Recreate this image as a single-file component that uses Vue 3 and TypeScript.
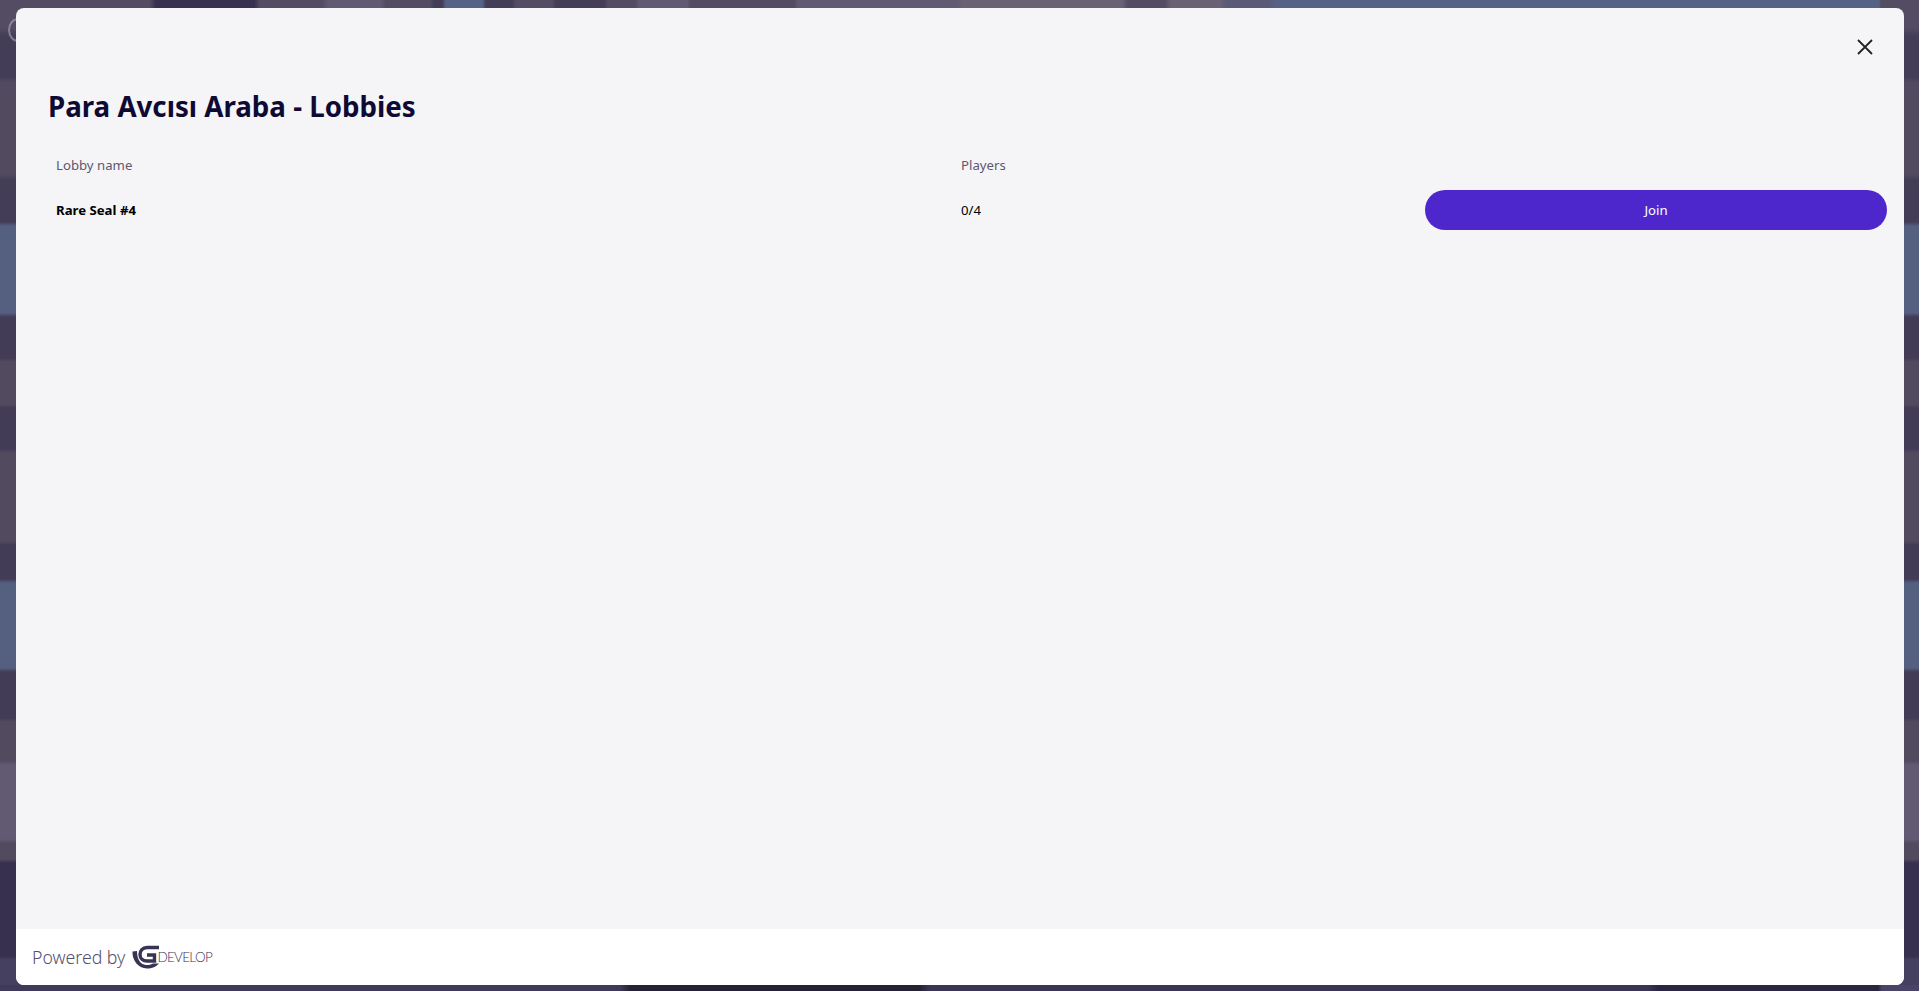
<script setup lang="ts">
interface Lobby { name: string; players: string }
const lobbies: Lobby[] = [{ name: 'Rare Seal #4', players: '0/4' }]
</script>

<template>
  <div class="page">
    <span class="ghost-letter"></span>
    <main class="modal">
      <div class="content">
        <div class="close-row">
          <button class="close" type="button" aria-label="Close">
            <svg width="16" height="16" viewBox="0 0 16 16">
              <path d="M1 1 15 15M15 1 1 15" stroke="#222" stroke-width="1.8" fill="none" />
            </svg>
          </button>
        </div>
        <h1 class="title">Para Avcısı Araba - Lobbies</h1>
        <div class="table">
          <div class="cell head">Lobby name</div>
          <div class="cell head">Players</div>
          <div class="cell head"></div>
          <template v-for="lobby in lobbies" :key="lobby.name">
            <div class="cell name">{{ lobby.name }}</div>
            <div class="cell players">{{ lobby.players }}</div>
            <div class="cell action"><button class="join" type="button">Join</button></div>
          </template>
        </div>
      </div>
      <footer class="footer">
        <span class="powered">Powered by</span>
        <span class="logo">
          <svg class="mark" width="28" height="24" viewBox="0 0 28 24">
            <path d="M0.5 6.5C0 15 6 23.5 15 23.5C20 23.5 24.5 21.5 27 18.5L21 18.5C18 20 16 20.2 14 20C8 19.5 5 14 5 6Z" fill="#3a3454" />
            <path d="M27 2.5H15C10.5 2.5 8 6 8 9.5C8 13.5 11 16 15 16H22.5V10H15" stroke="#3a3454" stroke-width="3.4" fill="none" />
          </svg>
          <span class="wordmark">DEVELOP</span>
        </span>
      </footer>
    </main>
  </div>
</template>

<style>
html, body { margin: 0; padding: 0; }
</style>

<style scoped>
.page {
  position: relative;
  box-sizing: border-box;
  width: 100%;
  height: 991px;
  padding: 8px 15px 6px 16px;
  display: flex;
  overflow: hidden;
  font-family: "Noto Sans", "Open Sans", sans-serif;
  background-color: #443d58;
  background-repeat: no-repeat;
  background-size: 100% 8px, 100% 6px, 100% 100%;
  background-position: top, bottom, center;
  background-image:
    linear-gradient(90deg,
      #544c62 0 150px, #37304e 156px 254px, #544c62 260px 322px, #625a72 328px 380px,
      #544c62 386px 430px, #443d58 434px 442px, #566285 446px 482px, #443d58 486px 512px,
      #544c62 516px 552px, #443d58 556px 604px, #544c62 608px 635px, #625a72 639px 687px,
      #544c62 691px 794px, #625a72 798px 958px, #6a6174 962px 1122px, #544c62 1128px 1165px,
      #6a6174 1171px 1220px, #5a5a78 1226px 1268px, #566285 1276px 1879px, #544c62 1881px),
    linear-gradient(90deg,
      #3f3a5a 0 620px, #262235 630px 920px, #3a3555 930px 1648px, #2a2640 1658px 1878px, #4a4568 1882px),
    linear-gradient(180deg,
      #544c62 0 28px, #443d58 36px 77px, #524b60 83px 174px, #443d58 180px 222px,
      #555f80 226px 313px, #423c56 317px 358px, #524b60 362px 404px, #423c56 408px 449px,
      #524b60 453px 541px, #423c56 545px 579px, #555f80 583px 668px, #423c56 672px 718px,
      #524b60 722px 761px, #625a72 765px 839px, #524b60 843px 859px, #37304e 863px 956px,
      #45405f 960px);
}
.ghost-letter {
  position: absolute;
  left: 8px;
  top: 18px;
  width: 20px;
  height: 24px;
  box-sizing: border-box;
  border: 2px solid rgba(255, 255, 255, 0.32);
  border-radius: 50%;
}
.modal {
  position: relative;
  flex: 1;
  min-width: 0;
  display: flex;
  flex-direction: column;
  border-radius: 8px;
  overflow: hidden;
  background: #f5f5f7;
}
.content {
  flex: 1;
  min-height: 0;
  padding: 0 9px 0 32px;
}
.close-row {
  display: flex;
  justify-content: flex-end;
  padding: 31px 22px 0 0;
}
.close {
  display: block;
  width: 16px;
  height: 16px;
  padding: 0;
  border: 0;
  background: none;
  cursor: pointer;
}
.title {
  margin: 32px 0 0;
  font-size: 27.7px;
  line-height: 38px;
  font-weight: 700;
  color: #0f0a33;
}
.table {
  margin-top: 25px;
  display: grid;
  grid-template-columns: 905px 464px 1fr;
  grid-auto-rows: auto;
}
.cell {
  padding: 0 8px;
  font-size: 13.2px;
  display: flex;
  align-items: center;
}
.head {
  height: 30px;
  color: #5c5872;
}
.name,
.players,
.action {
  height: 60px;
  color: #000;
}
.name { font-weight: 700; }
.join {
  width: 100%;
  height: 40px;
  border: 0;
  border-radius: 20px;
  background: #4e27cc;
  color: #fff;
  font: inherit;
  font-size: 13.2px;
  cursor: pointer;
}
.footer {
  flex: none;
  height: 56px;
  display: flex;
  align-items: center;
  gap: 7px;
  padding-left: 16px;
  background: #fff;
}
.powered {
  font-size: 17.7px;
  font-weight: 300;
  color: #55506b;
}
.logo {
  display: flex;
  align-items: center;
}
.mark { flex: none; }
.wordmark {
  margin-left: -3px;
  font-family: Lato, sans-serif;
  font-weight: 300;
  font-size: 13.5px;
  letter-spacing: -0.7px;
  color: #3a3454;
}
</style>
